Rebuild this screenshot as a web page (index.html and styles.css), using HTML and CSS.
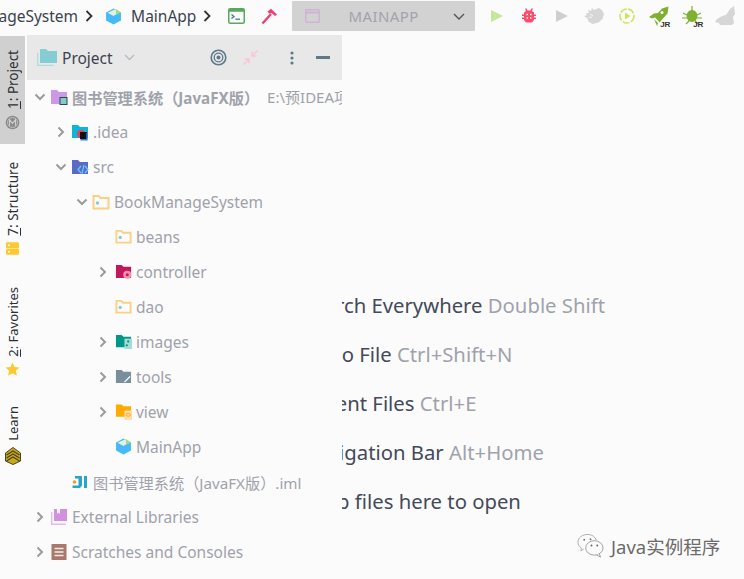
FILE: index.html
```html
<!DOCTYPE html>
<html lang="en">
  <head>
    <meta charset="UTF-8" />
    <title>MainApp</title>
    <link rel="stylesheet" href="styles.css">
  </head>
  <body>
    <!-- ===== TOP BAR ===== -->
    <header class="top-bar">
      <nav class="crumbs">
        <span>BookManageSystem</span>
        <svg class="crumb-sep" viewBox="0 0 8 12"><path d="M1.5 1l5 5-5 5"/></svg>
        <svg class="ico-cube" viewBox="0 0 16 16"><path fill="#45baf8" d="M8 .5l7 3.7v7.6l-7 3.7-7-3.7V4.200z"/><path fill="#e4f1e4" d="M2.500 4.500L10 1l3.500 3L8 7.500z"/><path fill="#a5d98b" d="M10 .8l5 3.400-4.500 2.200z"/></svg>
        <span class="crumb-main">MainApp</span>
        <svg class="crumb-sep" viewBox="0 0 8 12"><path d="M1.5 1l5 5-5 5"/></svg>
      </nav>
      <svg class="ico-term" viewBox="0 0 17 16"><rect x=".75" y=".75" width="15.500" height="14.500" rx="1.500" fill="none" stroke="#5aa85e" stroke-width="1.500"/><rect x=".75" y=".75" width="15.500" height="3" fill="#5aa85e"/><path d="M3.500 6.500l2.500 2-2.500 2" fill="none" stroke="#3f7f8f" stroke-width="1.300"/><path d="M7.500 11.200h4.500" stroke="#3f7f8f" stroke-width="1.300"/></svg>
      <svg class="ico-hammer" viewBox="0 0 17 17"><path d="M1.500 15.500L10 6" stroke="#ee3f73" stroke-width="2.400"/><path d="M6.500 3.500L10 .8l6 5.700-2 1.500-3.500-3-2.500.5z" fill="#ee3f73"/></svg>
      <div class="run-select">
        <svg class="ico-window" viewBox="0 0 15 14"><rect x=".75" y=".75" width="13.500" height="12.500" rx="1" fill="none" stroke="#cfb3d3" stroke-width="1.500"/><path d="M1 3.500h13" stroke="#cfb3d3" stroke-width="2"/></svg>
        <span class="run-name">MAINAPP</span>
        <svg class="select-caret" viewBox="0 0 12 7"><path d="M1 1l5 5 5-5"/></svg>
      </div>
      <div class="tools">
        <svg class="t-play" viewBox="0 0 12 14"><path fill="#c4e89b" d="M0 1v12l12-6z"/></svg>
        <svg class="t-bug" viewBox="0 0 14 16"><path fill="#fb4c6c" d="M4 3l-1-2.500h1.500L5.500 2.500h3L9.500.5H11L10 3l2 1.500v2h2V8h-2v1.500h2V11h-2v1l-2 2.500H4L2 12v-1H0V9.500h2V8H0V6.500h2v-2z"/><path d="M4.500 6.500h1.500M8 6.500h1.500M4.500 10h1.500M8 10h1.500" stroke="#fff" stroke-width="1.400"/></svg>
        <svg class="t-play2" viewBox="0 0 12 14"><path fill="#cfcfcf" d="M0 1v12l12-6z"/></svg>
        <svg class="t-bird" viewBox="0 0 20 17"><path fill="#d6d6d6" d="M0 9l3-1-1-2h3L4 3l3 1 1-3 2 2 5-2 3 2 2 4-1.500 5-4 3.500-6 1.500-4-2.500-1-3z"/><path d="M6 7l3 2M5 10l3 .5" stroke="#fbfbfb" stroke-width=".8"/></svg>
        <svg class="t-cover" viewBox="0 0 16 16"><circle cx="8" cy="8" r="7" fill="none" stroke="#cfe35c" stroke-width="1.500" stroke-dasharray="7 1.500"/><path fill="#cfe35c" d="M6 4.500v7l5.500-3.500z"/></svg>
        <span class="jr-ico">
          <svg viewBox="0 0 20 20"><path fill="#7fb02f" d="M19.500.5l-1 7-8 9-1.500-2-3-3-3 1-3-1.500 5-3.500 4-.5 4-4.500z"/><path fill="#7fb02f" d="M5 13l4 4-1 3z"/><circle cx="13" cy="6.500" r="1.500" fill="#fbfbfb"/></svg>
          <b>JR</b>
        </span>
        <span class="jr-ico">
          <svg viewBox="0 0 20 20"><ellipse cx="10" cy="10" rx="5.500" ry="6" fill="#7fb02f"/><path d="M10 0v5M1 7l4 2M19 7l-4 2M0 12h5M20 12h-5M4 18l3-3M16 18l-3-3" stroke="#7fb02f" stroke-width="1.200"/></svg>
          <b>JR</b>
        </span>
        <svg class="t-rabbit" viewBox="0 0 20 20"><path fill="#d6d6d6" d="M19 0l1 8-2 3 1 6-2 2H5l-1-2-4-1 2-3 5-3 4-1 4-6z"/></svg>
      </div>
    </header>

    <div class="app-wrap">
      <!-- ===== LEFT STRIPE ===== -->
      <aside class="stripe">
        <div class="stripe-item is-active">
          <span class="stripe-label"><u>1</u>: Project</span>
          <svg viewBox="0 0 16 16"><circle cx="8" cy="8" r="7.300" fill="#8a8a8a"/><circle cx="8" cy="8" r="5.300" fill="none" stroke="#d0d0d0" stroke-width=".8"/><path d="M4.800 11.500V5l3.200 4 3.200-4v6.500" fill="none" stroke="#d0d0d0" stroke-width="1.100"/></svg>
        </div>
        <div class="stripe-item item-structure">
          <span class="stripe-label"><u>7</u>: Structure</span>
          <svg viewBox="0 0 13 13"><rect width="13" height="6" y=".2" rx="1" fill="#fec82e"/><rect width="13" height="6" y="6.800" rx="1" fill="#fec82e"/><circle cx="3" cy="3.200" r="1" fill="#fff"/><circle cx="3" cy="9.800" r="1" fill="#fff"/></svg>
        </div>
        <div class="stripe-item item-favorites">
          <span class="stripe-label"><u>2</u>: Favorites</span>
          <svg viewBox="0 0 14 14"><path fill="#fec82e" d="M7 .5l2 4.500 5 .5-3.700 3.300 1.100 5L7 11.200 2.600 13.800l1.100-5L0 5.500 5 5z"/></svg>
        </div>
        <div class="stripe-item item-learn">
          <span class="stripe-label">Learn</span>
          <svg viewBox="0 0 16 18"><path fill="#c9a916" stroke="#4a4526" d="M8 .5l7.500 5.500v8L8 17.500.5 14V6z"/><path d="M1.500 8L8 4l6.500 4M1.500 11L8 7l6.500 4M1.500 14L8 10l6.500 4" fill="none" stroke="#4a4526" stroke-width="1.300"/></svg>
        </div>
      </aside>

      <!-- ===== PROJECT PANEL ===== -->
      <section class="panel">
        <div class="panel-head">
          <svg class="ico-head" viewBox="0 0 20 17"><path fill="#84cdd3" d="M3 0h6l2 2h9v12H3z"/><path fill="none" stroke="#a9dde1" stroke-width="1.300" d="M.7 4v12.300h16"/></svg>
          <span class="panel-title">Project</span>
          <svg class="head-caret" viewBox="0 0 11 7"><path d="M1 1l4.500 4.500L10 1"/></svg>
          <svg class="ico-target" viewBox="0 0 17 17"><circle cx="8.500" cy="8.500" r="7.300" fill="none" stroke="#5d7a8a" stroke-width="1.600"/><circle cx="8.500" cy="8.500" r="4.300" fill="none" stroke="#5d7a8a" stroke-width="1.300"/><circle cx="8.500" cy="8.500" r="2" fill="#5d7a8a"/></svg>
          <svg class="ico-collapse" viewBox="0 0 15 15"><path d="M14.500.5L9 6M9 1.500V6h4.500M.5 14.500L6 9M1.500 9H6v4.500" fill="none" stroke="#fcc4d4" stroke-width="1.500"/></svg>
          <svg class="ico-dots" viewBox="0 0 4 14"><circle cx="2" cy="2" r="1.600"/><circle cx="2" cy="7" r="1.600"/><circle cx="2" cy="12" r="1.600"/></svg>
          <span class="ico-minus"></span>
        </div>

        <ul class="tree">
          <li class="row lv0">
            <svg class="chev" viewBox="0 0 12 12"><path d="M1.500 3.500L6 8l4.500-4.500"/></svg>
            <svg class="node" viewBox="0 0 18 18"><path fill="#cb99e6" d="M1 2h6l2 2h8v12H1z"/><rect x="10" y="9.500" width="7" height="7" fill="#84cdc7" stroke="#2c4a50"/></svg>
            <span class="name is-root">图书管理系统（JavaFX版）</span>
            <span class="path">E:\预IDEA项目</span>
          </li>
          <li class="row lv1">
            <svg class="chev" viewBox="0 0 12 12"><path d="M3.500 1.500L8 6l-4.500 4.500"/></svg>
            <svg class="node" viewBox="0 0 18 18"><path fill="#0fb5d9" d="M1 2h6l2 2h8v11H1z"/><circle cx="10" cy="11" r="4" fill="#e8405e"/><rect x="9" y="9" width="7" height="7" fill="#111"/><path d="M16 10v6.800H9.500" fill="none" stroke="#3579f0" stroke-width="1.400"/></svg>
            <span class="name">.idea</span>
          </li>
          <li class="row lv1">
            <svg class="chev" viewBox="0 0 12 12"><path d="M1.500 3.500L6 8l4.500-4.500"/></svg>
            <svg class="node" viewBox="0 0 18 18"><path fill="#5b6bc4" d="M1 2h6l2 2h8v12H1z"/><path d="M10 8l-3 3.500 3 3.500M14 8l3 3.500-3 3.500M11 16l2-9" fill="none" stroke="#6cc6f8" stroke-width="1.200"/></svg>
            <span class="name">src</span>
          </li>
          <li class="row lv2">
            <svg class="chev" viewBox="0 0 12 12"><path d="M1.500 3.500L6 8l4.500-4.500"/></svg>
            <svg class="node" viewBox="0 0 18 18"><path class="pkg" d="M1.500 3h5l2 2h8v10.500h-15z"/><circle cx="5.500" cy="10" r="1.700" fill="#84cdc7"/></svg>
            <span class="name">BookManageSystem</span>
          </li>
          <li class="row lv3">
            <span class="chev-slot"></span>
            <svg class="node node-sm" viewBox="0 0 18 18"><path class="pkg" d="M1.500 3h5l2 2h8v10.500h-15z"/><circle cx="5.500" cy="10" r="1.700" fill="#84cdc7"/></svg>
            <span class="name">beans</span>
          </li>
          <li class="row lv3">
            <svg class="chev" viewBox="0 0 12 12"><path d="M3.500 1.500L8 6l-4.500 4.500"/></svg>
            <svg class="node node-sm" viewBox="0 0 18 18"><path fill="#c2185b" d="M1 2h6l2 2h8v12H1z"/><circle cx="13" cy="12.500" r="4.300" fill="#f48fb1"/><circle cx="13" cy="12.500" r="1.600" fill="#c2185b"/></svg>
            <span class="name">controller</span>
          </li>
          <li class="row lv3">
            <span class="chev-slot"></span>
            <svg class="node node-sm" viewBox="0 0 18 18"><path class="pkg" d="M1.500 3h5l2 2h8v10.500h-15z"/><circle cx="5.500" cy="10" r="1.700" fill="#84cdc7"/></svg>
            <span class="name">dao</span>
          </li>
          <li class="row lv3">
            <svg class="chev" viewBox="0 0 12 12"><path d="M3.500 1.500L8 6l-4.500 4.500"/></svg>
            <svg class="node node-sm" viewBox="0 0 18 18"><path fill="#009688" d="M1 2h6l2 2h8v11H1z"/><rect x="10" y="6" width="8" height="11" fill="#a5dcd5"/><circle cx="14" cy="9" r="1.200" fill="#009688"/><circle cx="12.500" cy="13" r="1.200" fill="#009688"/></svg>
            <span class="name">images</span>
          </li>
          <li class="row lv3">
            <svg class="chev" viewBox="0 0 12 12"><path d="M3.500 1.500L8 6l-4.500 4.500"/></svg>
            <svg class="node node-sm" viewBox="0 0 18 18"><path fill="#78909c" d="M1 2h6l2 2h8v12H1z"/><path d="M10 15l6-6" stroke="#fff" stroke-width="1.300"/></svg>
            <span class="name">tools</span>
          </li>
          <li class="row lv3">
            <svg class="chev" viewBox="0 0 12 12"><path d="M3.500 1.500L8 6l-4.500 4.500"/></svg>
            <svg class="node node-sm" viewBox="0 0 18 18"><path fill="#ffab00" d="M1 1.500h6l2 2h8v11H1z"/><rect x="10" y="8" width="8" height="10" rx="1" fill="#ffdcae"/><ellipse cx="14" cy="12.500" rx="2.500" ry="1.500" fill="none" stroke="#ffab00"/></svg>
            <span class="name">view</span>
          </li>
          <li class="row lv3">
            <span class="chev-slot"></span>
            <svg class="node node-sm" viewBox="0 0 16 16"><path fill="#45baf8" d="M8 .5l7 3.700v7.600l-7 3.700-7-3.700V4.200z"/><path fill="#e4f1e4" d="M2.500 4.500L10 1l3.500 3L8 7.500z"/><path fill="#a5d98b" d="M10 .8l5 3.400-4.500 2.200z"/></svg>
            <span class="name">MainApp</span>
          </li>
          <li class="row lv1">
            <span class="chev-slot"></span>
            <svg class="node" viewBox="0 0 18 18"><path fill="#2aa5c9" d="M4 3h7v9.500L9 15H1.500v-2.500h6V5.500H4z"/><rect x="13" y="3" width="3" height="12" fill="#2aa5c9"/><circle cx="3.500" cy="9" r="1.800" fill="#f59a23"/></svg>
            <span class="name is-iml">图书管理系统（JavaFX版）.iml</span>
          </li>
          <li class="row lv0">
            <svg class="chev" viewBox="0 0 12 12"><path d="M3.500 1.500L8 6l-4.500 4.500"/></svg>
            <svg class="node" viewBox="0 0 18 18"><path fill="#d291dc" d="M4 1h3v5l1.500-1.500L10 6V1h7v12H4z"/><path d="M1.700 4v12.300h14" fill="none" stroke="#e6b8ec" stroke-width="1.400"/></svg>
            <span class="name">External Libraries</span>
          </li>
          <li class="row lv0">
            <svg class="chev" viewBox="0 0 12 12"><path d="M3.500 1.500L8 6l-4.500 4.500"/></svg>
            <svg class="node" viewBox="0 0 18 18"><rect x="1.500" y="1" width="15" height="16" fill="#a9786a"/><path d="M4.500 5.500h9M4.500 9h9M4.500 12.500h9" stroke="#f4ece9" stroke-width="1.500"/></svg>
            <span class="name">Scratches and Consoles</span>
          </li>
        </ul>
      </section>

      <!-- ===== EDITOR HINTS ===== -->
      <main class="editor">
        <ul class="hints">
          <li>Search Everywhere <span>Double Shift</span></li>
          <li>Go to File <span>Ctrl+Shift+N</span></li>
          <li>Recent Files <span>Ctrl+E</span></li>
          <li>Navigation Bar <span>Alt+Home</span></li>
          <li>Drop files here to open</li>
        </ul>
      </main>
    </div>

    <!-- watermark over the editor -->
    <div class="watermark">
      <svg viewBox="0 0 28 26"><path d="M11 1C5.500 1 1 4.500 1 9c0 2.500 1.300 4.500 3.500 6L4 18l3-1.800" fill="none" stroke="#9a9a9a" stroke-width=".8"/><path d="M11 1c4.500 0 8 2.500 9 6" fill="none" stroke="#9a9a9a" stroke-width=".8"/><ellipse cx="18" cy="15" rx="9" ry="7.500" fill="#fbfbfb" stroke="#8a8a8a" stroke-width=".8"/><path d="M23 21l1.500 3.500-4-2" fill="#fbfbfb" stroke="#8a8a8a" stroke-width=".8"/><circle cx="7.500" cy="6.500" r="1" fill="#777"/><circle cx="14" cy="6" r="1" fill="#777"/><circle cx="15" cy="12.500" r="1" fill="#666"/><circle cx="21" cy="12.500" r="1" fill="#666"/></svg>
      <span>Java实例程序</span>
    </div>
  </body>
</html>
```

FILE: styles.css
```css
:root {
  --c-bg: #fbfbfb;
  --c-select: #d2d2d2;
  --c-head: #e8e8e8;
  --c-text: #3c4350;
  --c-muted: #a0a2ab;
  --c-chev: #9b9b9b;
}
*,*::before,*::after{box-sizing:border-box;margin:0;padding:0}
html,body{height:100%;background:var(--c-bg);color:var(--c-text);font-family:"Noto Sans","Noto Sans CJK SC",sans-serif;overflow:hidden}
ul{list-style:none}
svg{display:block;flex:none}

/* ===== TOP BAR ===== */
.top-bar{height:35px;display:flex;align-items:flex-start;overflow:hidden;font-size:15.500px}
.crumbs{display:flex;align-items:center;height:32px;margin-left:-71px;white-space:nowrap}
.crumb-sep{width:8px;height:12px;margin-left:7px;fill:none;stroke:#333;stroke-width:1.8}
.ico-cube{width:17px;height:17px;margin:0 9px 0 12px}
.ico-term{width:17px;height:16px;margin:8px 0 0 17px}
.ico-hammer{width:17px;height:17px;margin:8px 0 0 16px}
.run-select{width:183px;height:30px;margin:1px 0 0 14px;background:var(--c-select);border-radius:1px;display:flex;align-items:center;padding-left:13px;font-size:15px;color:#a2a3ab}
.ico-window{width:15px;height:14px}
.run-name{margin-left:28px;letter-spacing:.4px}
.select-caret{width:12px;height:7px;margin-left:auto;margin-right:10px;fill:none;stroke:#555;stroke-width:1.4}
.tools{display:flex;align-items:center;height:31px;margin-left:16px}
.t-play{width:12px;height:14px}
.t-bug{width:14px;height:16px;margin-left:19px}
.t-play2{width:12px;height:14px;margin-left:20px}
.t-bird{width:20px;height:17px;margin-left:16px}
.t-cover{width:16px;height:16px;margin-left:15px}
.jr-ico{position:relative;width:20px;height:20px;margin-left:14px}
.jr-ico + .jr-ico{margin-left:13px}
.jr-ico svg{width:20px;height:20px}
.jr-ico b{position:absolute;right:-1px;bottom:-3px;font-size:8px;line-height:8px;color:#333;font-family:"Liberation Sans",sans-serif}
.t-rabbit{width:20px;height:20px;margin-left:13px}

/* ===== LAYOUT ===== */
.app-wrap{display:flex;height:calc(100% - 35px)}

/* left stripe */
.stripe{width:27px;flex:none;display:flex;flex-direction:column;align-items:flex-start}
.stripe-item{width:25px;display:flex;flex-direction:column;align-items:center;gap:6px;font-size:13.500px;color:#2d2f33}
.stripe-item svg{width:15px;height:15px}
.stripe-label{writing-mode:vertical-rl;transform:rotate(180deg);line-height:18px;white-space:nowrap}
.is-active{background:#d0d0d0;height:108px;margin-top:1px;padding-top:14px}
.item-structure{margin-top:18px}
.item-structure svg{height:13px}
.item-favorites{margin-top:32px;font-size:13px}
.item-favorites svg{height:14px}
.item-learn{margin-top:30px;font-size:13px}
.item-learn svg{width:16px;height:18px}

/* ===== PROJECT PANEL ===== */
.panel{width:315px;flex:none;overflow:hidden}
.panel-head{height:45px;background:var(--c-head);display:flex;align-items:center;padding-left:10px;font-size:15.500px}
.ico-head{width:20px;height:17px}
.panel-title{margin-left:5px;color:var(--c-text)}
.head-caret{width:11px;height:7px;margin-left:11px;fill:none;stroke:#b5bcc0;stroke-width:1.300}
.ico-target{width:17px;height:17px;margin-left:75px}
.ico-collapse{width:15px;height:15px;margin-left:16px}
.ico-dots{width:4px;height:14px;margin-left:32px;fill:#5d7a8a}
.ico-minus{width:14px;height:3px;margin-left:22px;background:#5d7a8a}

/* tree */
.tree{margin-top:-1px}
.row{height:35px;display:flex;align-items:center;white-space:nowrap;font-size:15.500px;color:var(--c-muted)}
.lv0{padding-left:7px}
.lv1{padding-left:28px}
.lv2{padding-left:49px}
.lv3{padding-left:70px}
.chev,.chev-slot{width:12px;height:12px;margin-right:4px}
.chev{fill:none;stroke:var(--c-chev);stroke-width:2}
.node{width:18px;height:18px;margin-right:4px}
.node-sm{width:17px;height:17px;margin-left:2px;margin-right:4px}
.pkg{fill:none;stroke:#fccf85;stroke-width:2}
.is-root{font-weight:700;font-size:15.200px}
.is-iml{font-size:15.200px}
.path{margin-left:8px;font-size:15px}

/* ===== EDITOR ===== */
.editor{flex:1;overflow:hidden}
.hints{margin:246px 0 0 -40px;width:420px;font-size:20.300px;line-height:49px;white-space:nowrap;color:#444a5a}
.hints span{color:var(--c-muted)}

/* watermark */
.watermark{position:absolute;left:577px;top:533px;display:flex;align-items:center;gap:7px;font-size:18.500px;color:#6b6b6b}
.watermark svg{width:27px;height:26px}
```
